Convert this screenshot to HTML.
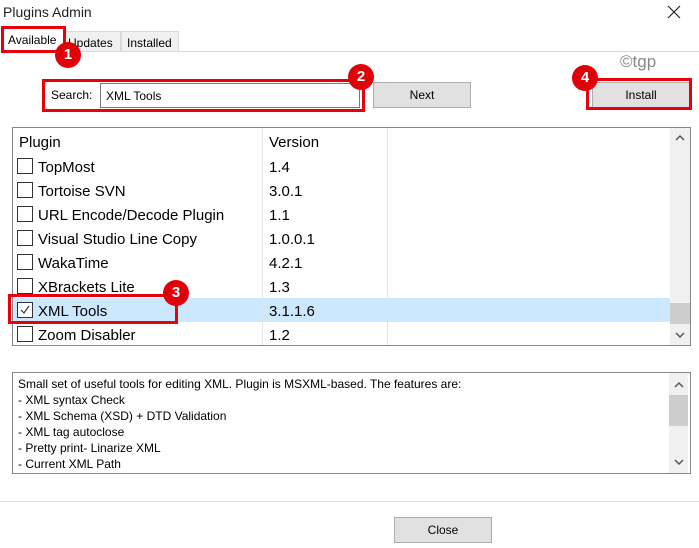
<!DOCTYPE html>
<html><head><style>
*{box-sizing:border-box;margin:0;padding:0}
body{width:699px;height:548px;background:#fff;position:relative;overflow:hidden;font-family:"Liberation Sans",sans-serif;color:#000}
.a{position:absolute}
.btn{position:absolute;background:#e1e1e1;border:1px solid #adadad;font-size:12px;text-align:center}
.red{position:absolute;border:3px solid #e8000b}
.badge{position:absolute;width:26px;height:26px;border-radius:50%;background:#e0000a;color:#fff;font-weight:bold;font-size:15px;text-align:center;line-height:26px}
.row{position:absolute;left:13px;width:657px;height:24px;font-size:15px}
.row .cb{position:absolute;left:4px;top:4px;width:16px;height:16px;border:1px solid #333;background:#fff}
.row .n{position:absolute;left:25px;top:5px}
.row .v{position:absolute;left:256px;top:5px}
.sb{position:absolute;background:#f0f0f0}
</style></head><body>
<div class="a" style="left:3px;top:4px;font-size:14px;color:#222">Plugins Admin</div>
<svg class="a" style="left:667px;top:5px" width="14" height="14"><path d="M1 1L13 13M13 1L1 13" stroke="#222" stroke-width="1.2"/></svg>
<div class="a" style="left:0;top:51px;width:699px;border-top:1px solid #dadada"></div>
<div class="a" style="left:61px;top:31px;width:60px;height:21px;border:1px solid #dadada;background:#f0f0f0;font-size:12px;padding:4px 0 0 6px">Updates</div>
<div class="a" style="left:121px;top:31px;width:58px;height:21px;border:1px solid #dadada;background:#f0f0f0;font-size:12px;padding:4px 0 0 5px">Installed</div>
<div class="a" style="left:2px;top:28px;width:61px;height:24px;background:#fff;font-size:12px;padding:5px 0 0 6px">Available</div>
<div class="red" style="left:1px;top:26px;width:65px;height:27px"></div>
<div class="badge" style="left:55px;top:42px">1</div>
<div class="a" style="left:51px;top:88px;font-size:12px">Search:</div>
<div class="a" style="left:100px;top:83px;width:260px;height:25px;border:1px solid #7a7a7a;font-size:12px;padding:5px 0 0 5px">XML Tools</div>
<div class="red" style="left:42px;top:79px;width:323px;height:33px"></div>
<div class="badge" style="left:348px;top:64px">2</div>
<div class="btn" style="left:373px;top:82px;width:98px;height:26px;line-height:24px">Next</div>
<div class="a" style="left:620px;top:52px;font-size:17px;color:#888">©tgp</div>
<div class="btn" style="left:592px;top:82px;width:98px;height:26px;line-height:24px">Install</div>
<div class="red" style="left:586px;top:78px;width:106px;height:32px"></div>
<div class="badge" style="left:572px;top:65px">4</div>
<div class="a" style="left:12px;top:127px;width:679px;height:219px;border:1px solid #828790;overflow:hidden">
  <div class="a" style="left:249px;top:0;width:1px;height:219px;background:#e5e5e5"></div>
  <div class="a" style="left:374px;top:0;width:1px;height:219px;background:#e5e5e5"></div>
  <div class="a" style="left:6px;top:6px;font-size:15px">Plugin</div>
  <div class="a" style="left:256px;top:6px;font-size:15px">Version</div>
  <div class="sb" style="left:657px;top:0;width:20px;height:217px"></div>
  <div class="sb" style="left:657px;top:175px;width:20px;height:21px;background:#cdcdcd"></div>
  <svg class="a" style="left:662px;top:6px" width="10" height="7"><path d="M1 6L5 2L9 6" stroke="#555" stroke-width="1.5" fill="none"/></svg>
  <svg class="a" style="left:662px;top:204px" width="10" height="7"><path d="M1 1L5 5L9 1" stroke="#555" stroke-width="1.5" fill="none"/></svg>
</div>
<div class="row" style="top:154px"><div class="cb"></div><div class="n">TopMost</div><div class="v">1.4</div></div>
<div class="row" style="top:178px"><div class="cb"></div><div class="n">Tortoise SVN</div><div class="v">3.0.1</div></div>
<div class="row" style="top:202px"><div class="cb"></div><div class="n">URL Encode/Decode Plugin</div><div class="v">1.1</div></div>
<div class="row" style="top:226px"><div class="cb"></div><div class="n">Visual Studio Line Copy</div><div class="v">1.0.0.1</div></div>
<div class="row" style="top:250px"><div class="cb"></div><div class="n">WakaTime</div><div class="v">4.2.1</div></div>
<div class="row" style="top:274px"><div class="cb"></div><div class="n">XBrackets Lite</div><div class="v">1.3</div></div>
<div class="row" style="top:298px;background:#cce8ff"><div class="cb"><svg width="14" height="14" style="position:absolute;left:0;top:0"><path d="M3 7L6 10L11 3" stroke="#333" stroke-width="1.2" fill="none"/></svg></div><div class="n">XML Tools</div><div class="v">3.1.1.6</div></div>
<div class="row" style="top:322px"><div class="cb"></div><div class="n">Zoom Disabler</div><div class="v">1.2</div></div>
<div class="a" style="left:262px;top:298px;width:1px;height:24px;background:#e5e5e5"></div>
<div class="red" style="left:8px;top:294px;width:170px;height:30px"></div>
<div class="badge" style="left:163px;top:280px">3</div>
<div class="a" style="left:12px;top:372px;width:679px;height:102px;border:1px solid #828790;font-size:12px;line-height:16px;padding:3px 0 0 5px">
Small set of useful tools for editing XML. Plugin is MSXML-based. The features are:<br>- XML syntax Check<br>- XML Schema (XSD) + DTD Validation<br>- XML tag autoclose<br>- Pretty print- Linarize XML<br>- Current XML Path
  <div class="sb" style="left:656px;top:0;width:19px;height:100px"></div>
  <div class="sb" style="left:656px;top:22px;width:19px;height:31px;background:#cdcdcd"></div>
  <svg class="a" style="left:661px;top:8px" width="10" height="7"><path d="M1 6L5 2L9 6" stroke="#555" stroke-width="1.5" fill="none"/></svg>
  <svg class="a" style="left:661px;top:86px" width="10" height="7"><path d="M1 1L5 5L9 1" stroke="#555" stroke-width="1.5" fill="none"/></svg>
</div>
<div class="a" style="left:0;top:501px;width:699px;border-top:1px solid #dadada"></div>
<div class="btn" style="left:394px;top:517px;width:98px;height:26px;line-height:24px">Close</div>
</body></html>
